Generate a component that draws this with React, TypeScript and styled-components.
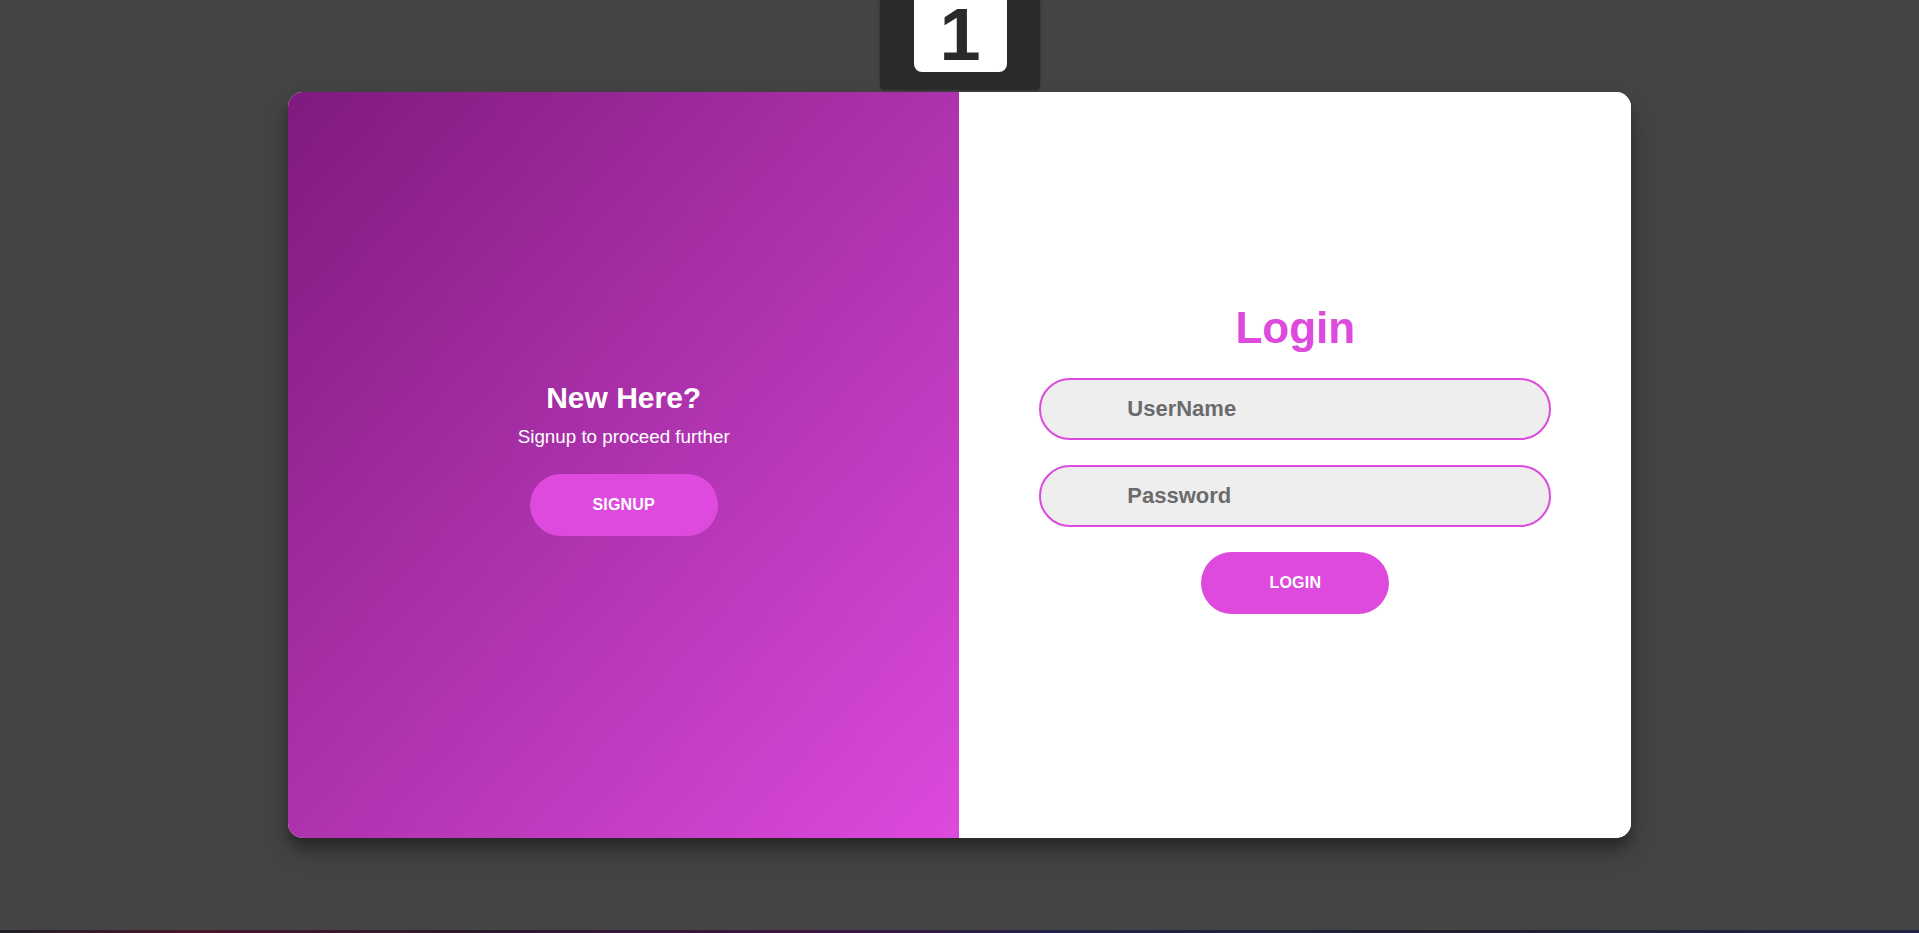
import React from 'react';
import styled, { createGlobalStyle } from 'styled-components';

const GlobalStyle = createGlobalStyle`
  html, body {
    margin: 0;
    padding: 0;
    background: #444444;
    font-family: "Liberation Sans", Arial, sans-serif;
  }
  * { box-sizing: border-box; }
`;

const Page = styled.div`
  position: relative;
  display: flex;
  flex-direction: column;
  min-height: 100vh;
`;

const Stage = styled.main`
  flex: 1;
  display: flex;
  align-items: center;
  justify-content: center;
`;

const Badge = styled.div`
  position: absolute;
  top: 0;
  left: 50%;
  transform: translateX(-50%);
  width: 160px;
  height: 90px;
  padding: 0 33px 18px 34px;
  background: #2a2a2a;
  border-radius: 0 0 5px 5px;
  box-shadow: 0 0 3px rgba(0, 0, 0, 0.35);
`;

const BadgeTile = styled.div`
  height: 72px;
  background: #ffffff;
  border-radius: 0 0 8px 8px;
  overflow: hidden;
  text-align: center;
`;

const BadgeDigit = styled.span`
  display: block;
  font-size: 74px;
  line-height: 69px;
  font-weight: 700;
  color: #2a2a2a;
`;

const Card = styled.section`
  display: grid;
  grid-template-columns: 1fr 1fr;
  width: 70vw;
  height: 80vh;
  border-radius: 15px;
  overflow: hidden;
  background: #ffffff;
  box-shadow: 0 14px 28px rgba(0, 0, 0, 0.25), 0 10px 10px rgba(0, 0, 0, 0.22);
`;

const Panel = styled.div<{ $accent?: boolean }>`
  display: flex;
  flex-direction: column;
  align-items: center;
  justify-content: center;
  padding-bottom: 13px;
  background: ${(p) =>
    p.$accent ? 'linear-gradient(to bottom right, #7f1a7e, #dd4add)' : '#ffffff'};
  color: ${(p) => (p.$accent ? '#ffffff' : '#dd4add')};
`;

const Heading = styled.h2`
  margin: 0;
  font-size: 30px;
  line-height: 1.117;
  font-weight: 700;
`;

const Subtitle = styled.p`
  margin: 12px 0 27px;
  font-size: 18.8px;
  line-height: 1.117;
`;

const Title = styled.h1`
  margin: 0 0 26px;
  font-size: 44px;
  line-height: 1.117;
  font-weight: 700;
  color: #dd4add;
`;

const Form = styled.form`
  display: flex;
  flex-direction: column;
  align-items: center;
  gap: 25px;
`;

const Field = styled.input`
  width: 512px;
  height: 62px;
  padding: 0 20px 0 86px;
  border: 2px solid #dd4add;
  border-radius: 31px;
  background: #eeeeee;
  font-family: "Liberation Sans", Arial, sans-serif;
  font-size: 22px;
  font-weight: 700;
  color: #333;
  outline: none;

  &::placeholder {
    color: #6b6b6b;
    opacity: 1;
  }
`;

const Button = styled.button`
  width: 188px;
  height: 62px;
  border: none;
  border-radius: 31px;
  background: #dd4add;
  color: #ffffff;
  font-family: "Liberation Sans", Arial, sans-serif;
  font-size: 16px;
  font-weight: 700;
  letter-spacing: 0.2px;
  cursor: pointer;
`;

const Strip = styled.div`
  height: 3px;
  background: linear-gradient(
    to right,
    #202024 0%,
    #4a1630 10%,
    #2a1a2c 25%,
    #3e1642 42%,
    #23224a 55%,
    #1f1f2c 75%,
    #24244a 100%
  );
`;

const App = () => {
  return (
    <Page>
      <GlobalStyle />
      <Badge>
        <BadgeTile>
          <BadgeDigit>1</BadgeDigit>
        </BadgeTile>
      </Badge>
      <Stage>
        <Card>
          <Panel $accent>
            <Heading>New Here?</Heading>
            <Subtitle>Signup to proceed further</Subtitle>
            <Button type="button">SIGNUP</Button>
          </Panel>
          <Panel>
            <Title>Login</Title>
            <Form onSubmit={(e) => e.preventDefault()}>
              <Field type="text" placeholder="UserName" />
              <Field type="password" placeholder="Password" />
              <Button type="submit">LOGIN</Button>
            </Form>
          </Panel>
        </Card>
      </Stage>
      <Strip />
    </Page>
  );
};

export default App;
